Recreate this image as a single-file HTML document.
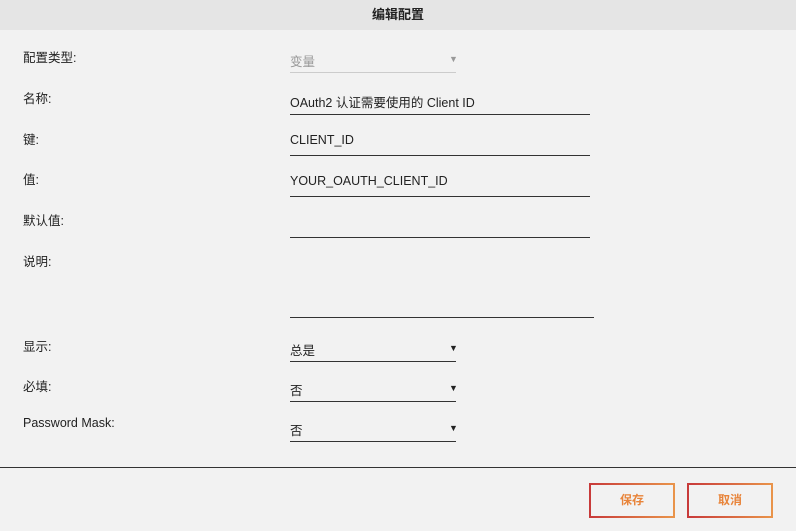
<html><head><style>
body{margin:0;width:796px;height:531px;background:#f2f2f2;font-family:"Liberation Sans","Noto Sans CJK SC",sans-serif;font-size:12.5px;color:#222;position:relative;overflow:hidden}
.h{position:absolute;left:0;top:0;width:796px;height:30px;background:#e5e5e5;text-align:center;line-height:30px;font-weight:bold;font-size:13px}
.a{position:absolute;white-space:nowrap}
.l{left:23px}
.u{position:absolute;border-bottom:1px solid #333;height:0}
.ar{position:absolute;font-size:9px}
.b{position:absolute;top:483px;width:82px;height:31px;border:2px solid;border-image:linear-gradient(90deg,#c83a3a,#e9944a) 1;border-radius:3px;text-align:center;line-height:31px;color:#e8843a;font-weight:bold;font-size:12px}
</style></head><body>
<div class="h">编辑配置</div>
<div class="a l" style="top:47px">配置类型:</div>
<div class="a" style="left:290px;top:51px;color:#999">变量</div>
<div class="ar" style="left:449px;top:54px;color:#999">▼</div>
<div class="u" style="left:290px;top:72px;width:166px;border-color:#ccc"></div>
<div class="a l" style="top:88px">名称:</div>
<div class="a" style="left:290px;top:92px">OAuth2 认证需要使用的 Client ID</div>
<div class="u" style="left:290px;top:114px;width:300px"></div>
<div class="a l" style="top:129px">键:</div>
<div class="a" style="left:290px;top:133px">CLIENT_ID</div>
<div class="u" style="left:290px;top:155px;width:300px"></div>
<div class="a l" style="top:169px">值:</div>
<div class="a" style="left:290px;top:174px">YOUR_OAUTH_CLIENT_ID</div>
<div class="u" style="left:290px;top:196px;width:300px"></div>
<div class="a l" style="top:210px">默认值:</div>
<div class="u" style="left:290px;top:237px;width:300px"></div>
<div class="a l" style="top:251px">说明:</div>
<div class="u" style="left:290px;top:317px;width:304px"></div>
<div class="a l" style="top:336px">显示:</div>
<div class="a" style="left:290px;top:340px">总是</div>
<div class="ar" style="left:449px;top:343px">▼</div>
<div class="u" style="left:290px;top:361px;width:166px"></div>
<div class="a l" style="top:376px">必填:</div>
<div class="a" style="left:290px;top:380px">否</div>
<div class="ar" style="left:449px;top:383px">▼</div>
<div class="u" style="left:290px;top:401px;width:166px"></div>
<div class="a l" style="top:416px">Password Mask:</div>
<div class="a" style="left:290px;top:420px">否</div>
<div class="ar" style="left:449px;top:423px">▼</div>
<div class="u" style="left:290px;top:441px;width:166px"></div>
<div class="u" style="left:0;top:467px;width:796px"></div>
<div class="b" style="left:589px">保存</div>
<div class="b" style="left:687px">取消</div>
</body></html>
